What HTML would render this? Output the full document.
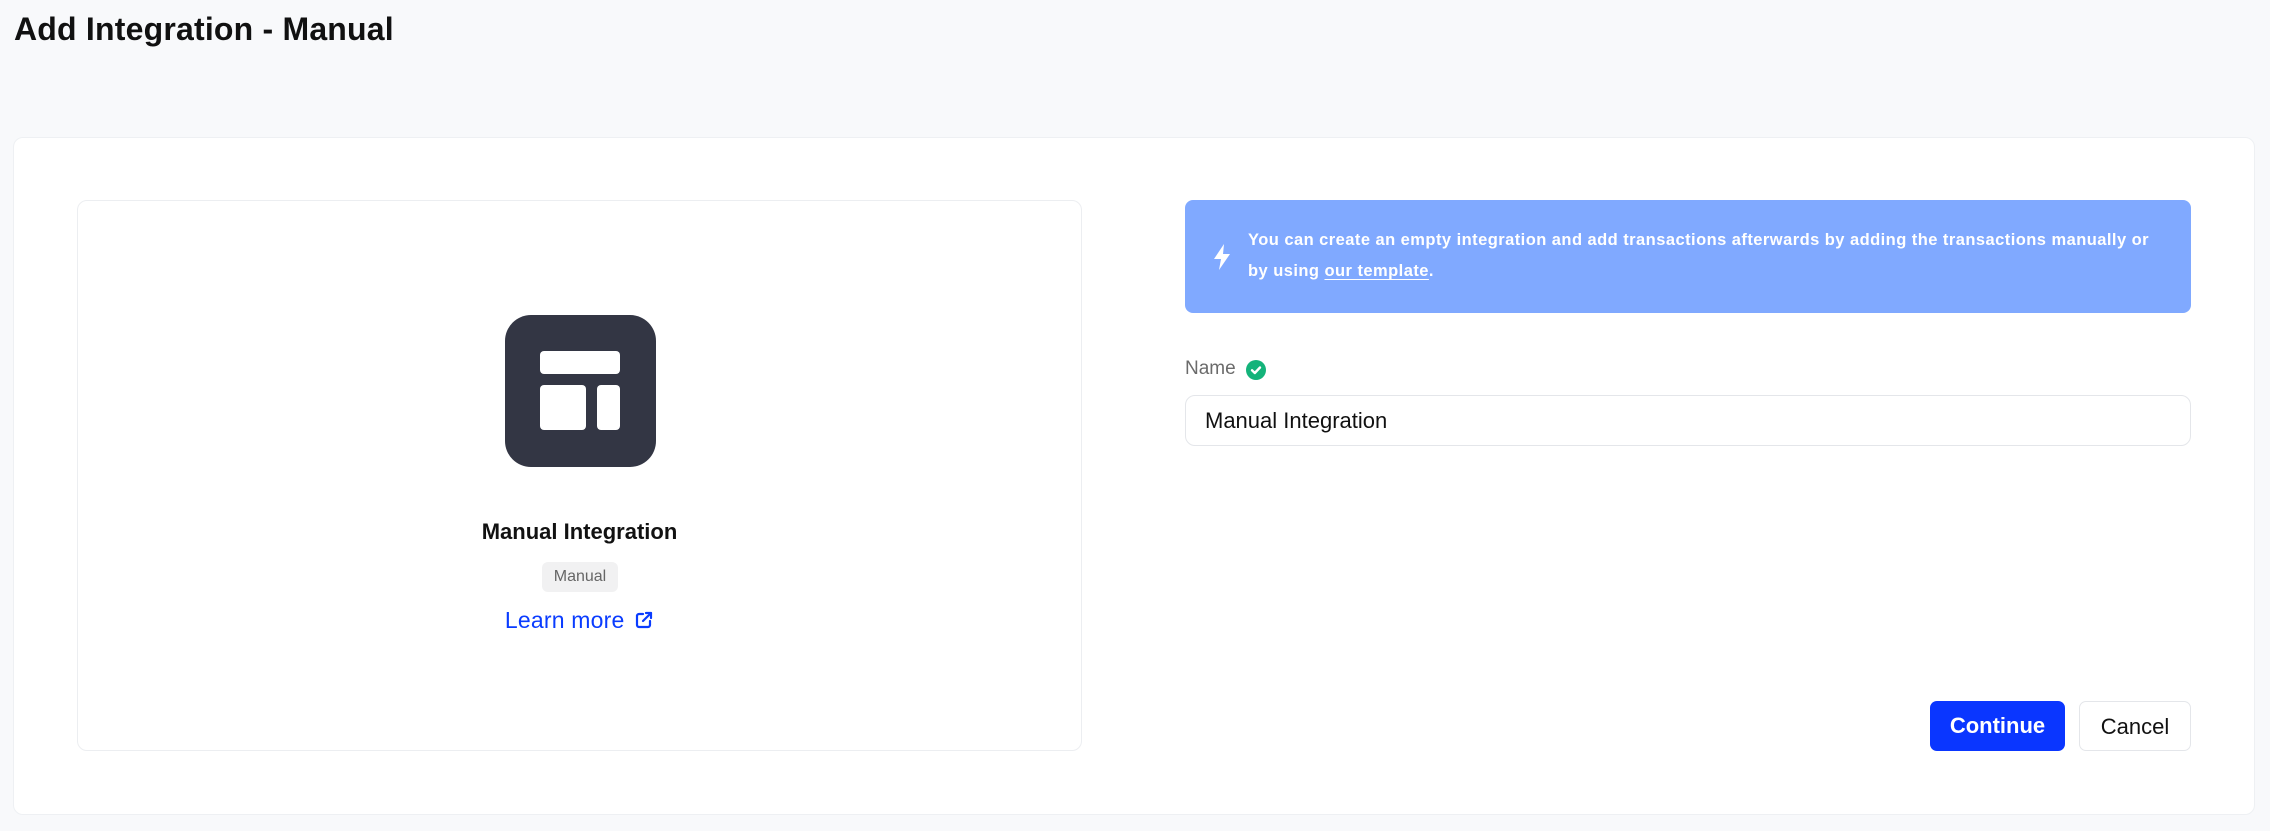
<!DOCTYPE html>
<html><head><meta charset="utf-8"><style>
*{box-sizing:border-box;margin:0;padding:0}
body{width:2270px;height:831px;background:#f8f9fb;font-family:"Liberation Sans",sans-serif;position:relative;overflow:hidden;color:#111}
.abs{position:absolute}
h1{position:absolute;left:14px;top:11px;font-size:32px;font-weight:bold;color:#111;letter-spacing:0.2px}
.card{left:13px;top:137px;width:2242px;height:678px;background:#fff;border:1px solid #eef0f3;border-radius:10px}
.inner{left:77px;top:200px;width:1005px;height:551px;border:1px solid #eceef1;border-radius:10px}
.icon{left:505px;top:315px;width:151px;height:152px;background:#333644;border-radius:26px}
.w{position:absolute;background:#fff;border-radius:4px}
.center{position:absolute;left:77px;width:1005px;text-align:center}
.badge{left:542px;top:562px;width:76px;height:30px;background:#f1f1f2;border-radius:6px;font-size:16px;color:#666;text-align:center;line-height:30px}
.info{left:1185px;top:200px;width:1006px;height:113px;background:#80a9ff;border-radius:8px}
.info p{position:absolute;left:63px;top:25px;width:940px;color:#fff;font-size:16.5px;font-weight:bold;line-height:31px;letter-spacing:0.45px}
.info u{text-underline-offset:3px}
.input{left:1185px;top:395px;width:1006px;height:51px;border:1px solid #e4e6ea;border-radius:10px;font-size:22px;line-height:49px;padding-left:19px;color:#111}
.btn{top:701px;height:50px;border-radius:7px;font-size:22px;text-align:center;line-height:50px}
</style></head><body>
<h1>Add Integration - Manual</h1>
<div class="abs card"></div>
<div class="abs inner"></div>
<div class="abs icon">
 <div class="w" style="left:35px;top:36px;width:80px;height:23px"></div>
 <div class="w" style="left:35px;top:70px;width:46px;height:45px"></div>
 <div class="w" style="left:92px;top:70px;width:23px;height:45px"></div>
</div>
<div class="center" style="top:519px;font-size:22px;font-weight:bold">Manual Integration</div>
<div class="abs badge">Manual</div>
<div class="center" style="top:607px;font-size:23px;color:#0a3cff;letter-spacing:0.2px">Learn more <svg width="20" height="20" viewBox="0 0 20 20" style="vertical-align:-2px;margin-left:3px" fill="none" stroke="#0a3cff" stroke-width="2.2" stroke-linecap="round" stroke-linejoin="round"><path d="M9 4H5a2 2 0 0 0-2 2v9a2 2 0 0 0 2 2h9a2 2 0 0 0 2-2v-4"/><path d="M12 3h5v5"/><path d="M17 3l-8 8"/></svg></div>
<div class="abs info">
 <svg class="abs" style="left:27px;top:43px" width="20" height="28" viewBox="0 0 20 28"><path d="M12 1L2 16h7l-2 11 11-16h-7z" fill="#fff"/></svg>
 <p>You can create an empty integration and add transactions afterwards by adding the transactions manually or<br>by using <u>our template</u>.</p>
</div>
<div class="abs" style="left:1185px;top:358px;font-size:19px;color:#6b6b6b">Name</div>
<svg class="abs" style="left:1246px;top:360px" width="20" height="20" viewBox="0 0 20 20"><circle cx="10" cy="10" r="10" fill="#14b37a"/><path d="M6 10.3l2.8 2.7L14 7.5" stroke="#fff" stroke-width="2.4" fill="none" stroke-linecap="round" stroke-linejoin="round"/></svg>
<div class="abs input">Manual Integration</div>
<div class="abs btn" style="left:1930px;width:135px;background:#0a36ff;color:#fff;font-weight:bold">Continue</div>
<div class="abs btn" style="left:2079px;width:112px;background:#fff;border:1px solid #e4e6ea;color:#111">Cancel</div>
</body></html>
